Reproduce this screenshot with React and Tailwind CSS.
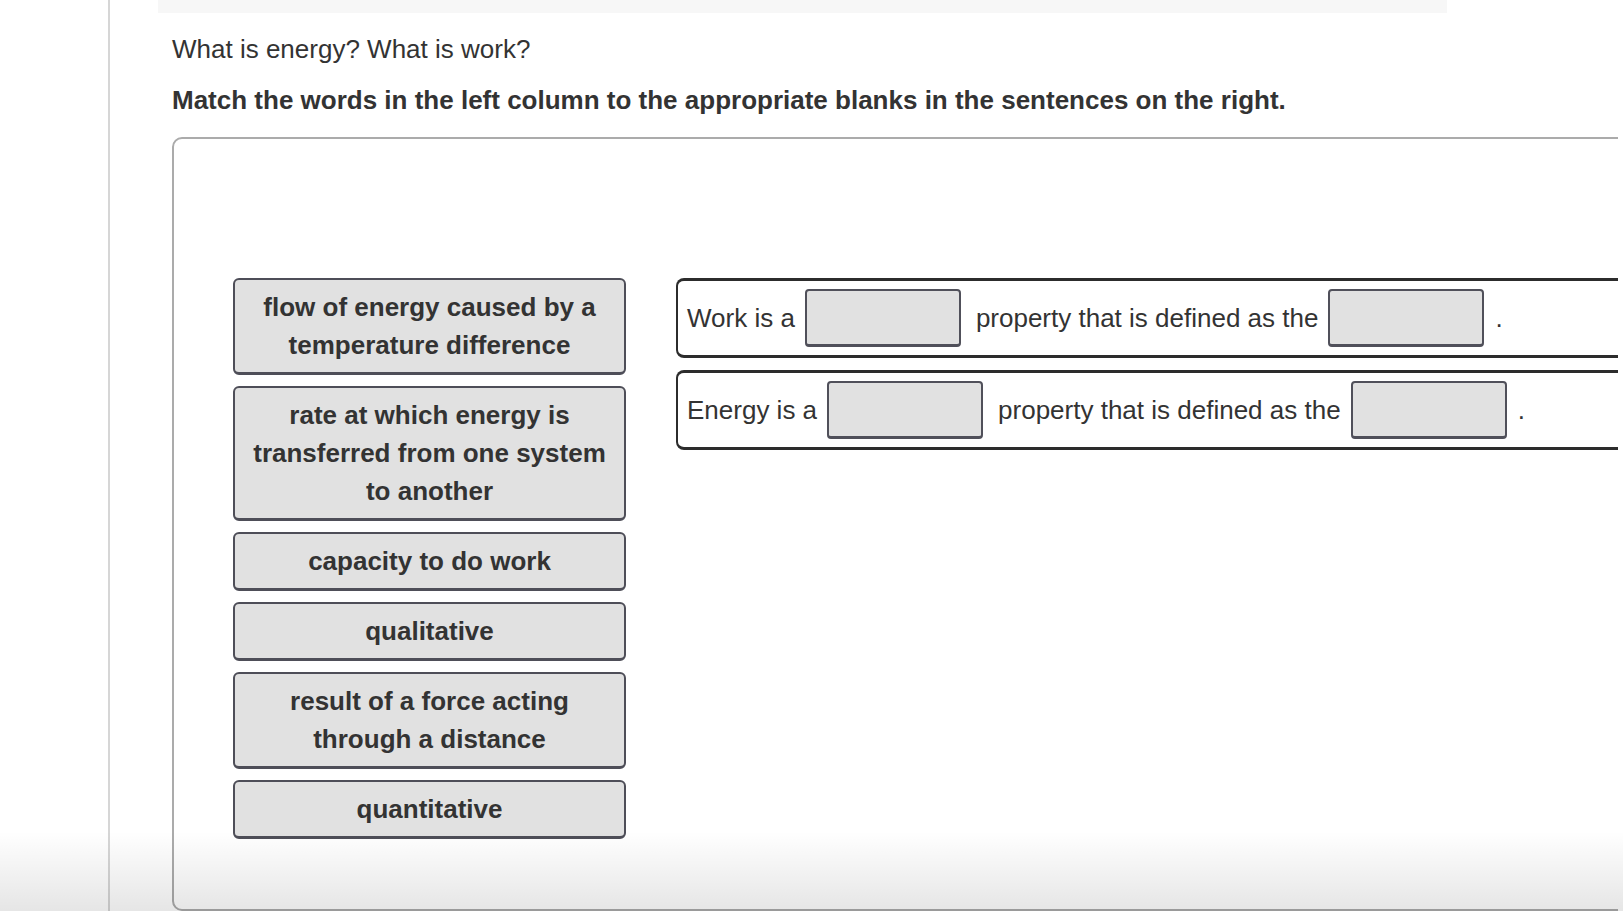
import React from "react";

const cards = [
  ["flow of energy caused by a", "temperature difference"],
  ["rate at which energy is", "transferred from one system", "to another"],
  ["capacity to do work"],
  ["qualitative"],
  ["result of a force acting", "through a distance"],
  ["quantitative"],
];

function Blank({ className = "" }) {
  return (
    <div
      className={
        "w-[156px] h-[58px] shrink-0 bg-[#e1e1e1] border-2 border-[#50505a] border-b-[3px] rounded-[4px] " +
        className
      }
    />
  );
}

function Row({ lead }) {
  return (
    <div className="flex items-center h-[80px] border-t-[3px] border-b-[3px] border-l-2 border-[#2c2c2c] rounded-l-[8px] pl-[9px] text-[26px] text-[#333] whitespace-nowrap">
      <span>{lead}</span>
      <Blank className="ml-[10px] mr-[15px]" />
      <span>property that is defined as the</span>
      <Blank className="ml-[10px] mr-[11px]" />
      <span>.</span>
    </div>
  );
}

export default function App() {
  return (
    <div
      className="relative w-[1623px] h-[911px] overflow-hidden bg-white flex text-[#333]"
      style={{ fontFamily: '"Liberation Sans", Arial, Helvetica, sans-serif' }}
    >
      <div className="w-[110px] shrink-0 border-r-2 border-[#d6d6d6]" />
      <div className="w-[1508px] shrink-0 overflow-hidden flex flex-col">
        <div className="ml-[48px] w-[1289px] h-[13px] bg-[#f7f7f7] shrink-0" />
        <div className="pl-[62px] flex flex-col">
          <p className="mt-[21px] text-[26px] leading-[30px]">What is energy? What is work?</p>
          <p className="mt-[21px] text-[26px] leading-[30px] font-bold whitespace-nowrap">
            Match the words in the left column to the appropriate blanks in the sentences on the right.
          </p>
          <div className="mt-[22px] w-[1600px] h-[774px] shrink-0 border-2 border-[#ababab] rounded-[10px] pt-[139px] pl-[59px] flex gap-[50px]">
            <div className="w-[393px] shrink-0 flex flex-col gap-[11px]">
              {cards.map((lines, i) => (
                <div
                  key={i}
                  className="bg-[#e1e1e1] border-2 border-[#4e4e58] border-b-[3px] rounded-[6px] py-[8px] text-center font-bold text-[26px] leading-[38px] text-[#333]"
                >
                  {lines.map((l, j) => (
                    <div key={j}>{l}</div>
                  ))}
                </div>
              ))}
            </div>
            <div className="flex-1 flex flex-col gap-[12px]">
              <Row lead="Work is a" />
              <Row lead="Energy is a" />
            </div>
          </div>
        </div>
      </div>
      <div className="pointer-events-none absolute inset-x-0 bottom-0 h-[80px] bg-linear-to-b from-transparent to-black/10" />
    </div>
  );
}
